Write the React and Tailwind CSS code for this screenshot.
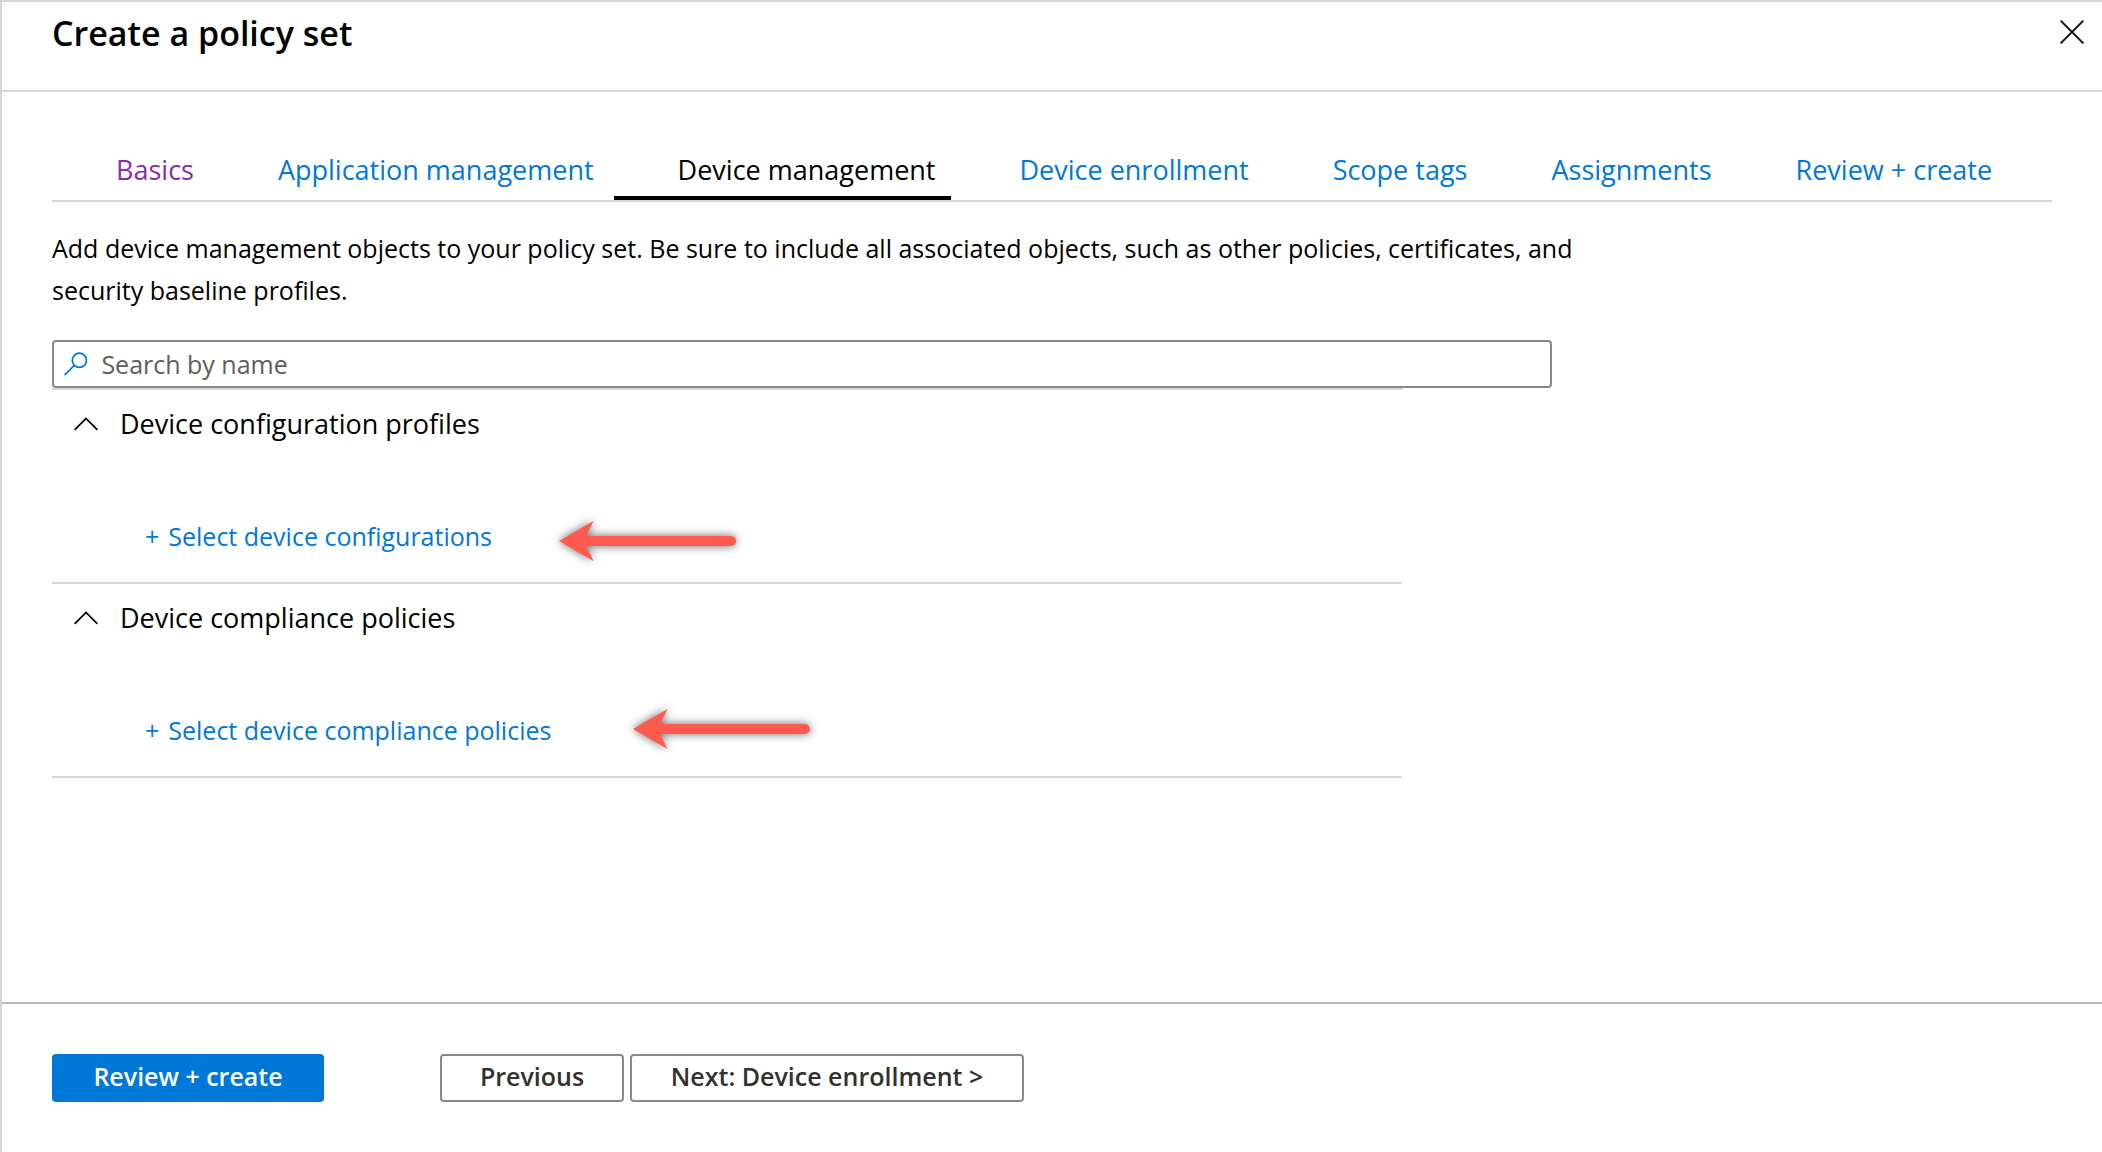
import { useState } from 'react'

const TABS = [
  { label: 'Basics', color: 'text-[#8a2da5]' },
  { label: 'Application management', color: 'text-[#0078d7]' },
  { label: 'Device management', color: 'text-black' },
  { label: 'Device enrollment', color: 'text-[#0078d7]' },
  { label: 'Scope tags', color: 'text-[#0078d7]' },
  { label: 'Assignments', color: 'text-[#0078d7]' },
  { label: 'Review + create', color: 'text-[#0078d7]' },
]

function CloseIcon() {
  return (
    <svg width="24" height="24" viewBox="0 0 24 24" fill="none" stroke="black" strokeWidth="1.8">
      <path d="M0.6 0.6L23.4 23.4M23.4 0.6L0.6 23.4" />
    </svg>
  )
}

function SearchIcon() {
  return (
    <svg width="24" height="24" viewBox="0 0 24 24" fill="none" stroke="#0078d7" strokeWidth="1.8">
      <circle cx="15.8" cy="8.2" r="7.3" />
      <path d="M10.6 13.4L0.6 23.4" />
    </svg>
  )
}

function Chevron({ open }) {
  return (
    <svg
      width="24"
      height="14"
      viewBox="0 0 24 14"
      fill="none"
      stroke="black"
      strokeWidth="1.8"
      className={open ? '' : 'rotate-180'}
    >
      <path d="M0.6 12.8L12 1.4L23.4 12.8" />
    </svg>
  )
}

function Arrow({ className }) {
  return (
    <svg
      width="177"
      height="40"
      viewBox="0 0 177 40"
      aria-hidden="true"
      className={`absolute overflow-visible drop-shadow-[0_0_5px_rgba(0,0,0,0.6)] ${className}`}
    >
      <path
        d="M0 20L34.5 0L27 15H172A5 5 0 0 1 172 25H27L34.5 40Z"
        fill="#ff5a4d"
      />
    </svg>
  )
}

function Section({ title, action, arrowClass }) {
  const [open, setOpen] = useState(true)

  return (
    <section className="relative border-t-2 border-[#d6d6d6] pt-[18px] pb-[30px]">
      <h2>
        <button
          type="button"
          aria-expanded={open}
          onClick={() => setOpen(!open)}
          className="flex items-center gap-[22px] pl-[22px] text-[27px] leading-8"
        >
          <Chevron open={open} />
          {title}
        </button>
      </h2>

      {open && (
        <>
          <a
            href="#select"
            className="mt-20 ml-[93px] flex w-fit gap-[9px] text-[25px] leading-8 text-[#0078d7]"
          >
            <span>+</span>
            <span>{action}</span>
          </a>
          <Arrow className={arrowClass} />
        </>
      )}
    </section>
  )
}

export default function App() {
  const [search, setSearch] = useState('')

  return (
    <div className="flex min-h-screen flex-col border-t-2 border-l-2 border-[#d6d6d6] bg-white font-['Open_Sans',sans-serif] text-black">

      <header className="flex items-start justify-between border-b-2 border-[#d6d6d6] pt-[11px] pr-[18px] pb-[37px] pl-[50px]">
        <h1 className="text-[34px] leading-10 font-semibold">
          Create a policy set
        </h1>
        <button type="button" aria-label="Close" className="mt-[7px]">
          <CloseIcon />
        </button>
      </header>

      <main className="px-[50px] pt-[62px] pb-12">

        <nav className="flex gap-1 border-b-2 border-[#d6d6d6]">
          {TABS.map((tab) => (
            <a
              key={tab.label}
              href="#tab"
              className={`border-b-4 pr-4 pb-[10px] pl-16 text-[27px] leading-8 whitespace-nowrap ${tab.color} ${
                tab.label === 'Device management' ? 'border-black' : 'border-transparent'
              }`}
            >
              {tab.label}
            </a>
          ))}
        </nav>

        <p className="mt-[25px] max-w-[1560px] text-[25px] leading-[42px]">
          Add device management objects to your policy set. Be sure to include all associated
          objects, such as other policies, certificates, and security baseline profiles.
        </p>

        <label className="mt-[29px] flex h-12 max-w-[1500px] items-center gap-[14px] rounded-[4px] border-2 border-[#8a8886] px-[10px]">
          <SearchIcon />
          <input
            type="text"
            aria-label="Search by name"
            placeholder="Search by name"
            value={search}
            onChange={(e) => setSearch(e.target.value)}
            className="w-full text-[25px] leading-8 outline-none placeholder:text-[#605e5c]"
          />
        </label>

        <div className="max-w-[1350px] border-b-2 border-[#d6d6d6]">
          <Section
            title="Device configuration profiles"
            action="Select device configurations"
            arrowClass="top-[131px] left-[507px]"
          />
          <Section
            title="Device compliance policies"
            action="Select device compliance policies"
            arrowClass="top-[125px] left-[581px]"
          />
        </div>

      </main>

      <footer className="mt-auto flex border-t-2 border-[#bababa] px-[50px] py-[50px] text-[25px] leading-8 font-semibold">
        <button
          type="button"
          className="h-12 min-w-[272px] rounded-[4px] bg-[#0078d7] pb-1 text-white"
        >
          Review + create
        </button>
        <button
          type="button"
          className="ml-[116px] h-12 min-w-[184px] rounded-[4px] border-2 border-[#8a8886] pb-1 text-[#323130]"
        >
          Previous
        </button>
        <button
          type="button"
          className="ml-[6px] h-12 min-w-[394px] rounded-[4px] border-2 border-[#8a8886] pb-1 text-[#323130]"
        >
          Next: Device enrollment &gt;
        </button>
      </footer>

    </div>
  )
}
